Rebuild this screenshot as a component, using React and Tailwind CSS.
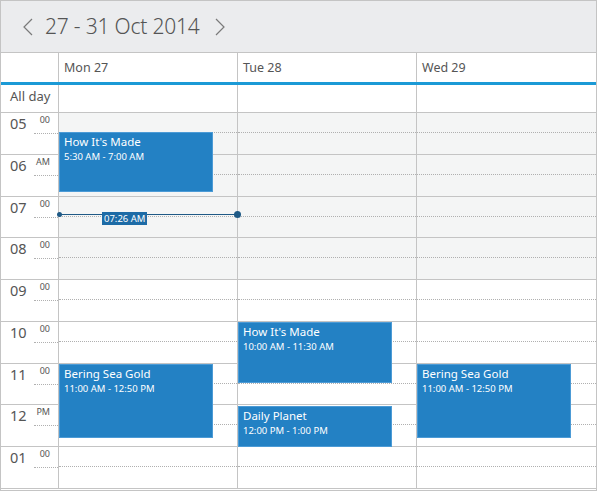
import React from 'react';

const hours = [
  { h: '05', m: '00' },
  { h: '06', m: 'AM' },
  { h: '07', m: '00' },
  { h: '08', m: '00' },
  { h: '09', m: '00' },
  { h: '10', m: '00' },
  { h: '11', m: '00' },
  { h: '12', m: 'PM' },
  { h: '01', m: '00' },
];

const days = ['Mon 27', 'Tue 28', 'Wed 29'];

const events = {
  0: [
    { title: "How It's Made", time: '5:30 AM - 7:00 AM', top: 19, height: 60 },
    { title: 'Bering Sea Gold', time: '11:00 AM - 12:50 PM', top: 251, height: 74 },
  ],
  1: [
    { title: "How It's Made", time: '10:00 AM - 11:30 AM', top: 209, height: 61 },
    { title: 'Daily Planet', time: '12:00 PM - 1:00 PM', top: 293, height: 41 },
  ],
  2: [{ title: 'Bering Sea Gold', time: '11:00 AM - 12:50 PM', top: 251, height: 74 }],
};

const Chevron = ({ dir }) => (
  <svg width="12" height="20" viewBox="0 0 12 20" className="text-[#7a7a7a]">
    <path
      d={dir === 'left' ? 'M10 2 L2 10 L10 18' : 'M2 2 L10 10 L2 18'}
      fill="none"
      stroke="currentColor"
      strokeWidth="1.2"
    />
  </svg>
);

const Event = ({ ev }) => (
  <div
    className="absolute left-0 w-[154px] bg-[#2381c4] border border-[#4c9bd6] px-[4px] text-white"
    style={{ top: ev.top, height: ev.height }}
  >
    <div className="text-[11.5px] leading-[18px]">{ev.title}</div>
    <div className="text-[9.5px] leading-[12px]">{ev.time}</div>
  </div>
);

const App = () => {
  return (
    <div className="w-[597px] h-[491px] overflow-hidden border border-[#c4c4c4] bg-white font-['Noto_Sans','Open_Sans',sans-serif] text-[#555]">
      <div className="h-[52px] bg-[#ebecee] border-b border-[#c4c4c4] flex items-center pl-[21px]">
        <Chevron dir="left" />
        <span className="ml-[11px] mr-[14px] text-[21px] font-light text-[#555] tracking-[-0.2px]">27 - 31 Oct 2014</span>
        <Chevron dir="right" />
      </div>

      <div className="grid grid-cols-[57px_179px_179px_1fr] h-[29px]">
        <div />
        {days.map((d) => (
          <div key={d} className="border-l border-[#c4c4c4] pl-[5px] pt-[6px] text-[12.5px]">
            {d}
          </div>
        ))}
      </div>
      <div className="h-[3px] bg-[#1b9ad6]" />

      <div className="grid grid-cols-[57px_179px_179px_1fr] h-[28px] border-b border-[#c4c4c4]">
        <div className="pl-[9px] pt-[2px] text-[13px]">All day</div>
        <div className="border-l border-[#c4c4c4]" />
        <div className="border-l border-[#c4c4c4]" />
        <div className="border-l border-[#c4c4c4]" />
      </div>

      <div className="grid grid-cols-[57px_179px_179px_1fr]">
        <div>
          {hours.map((r) => (
            <div key={r.h} className="relative h-[41.78px] border-b border-[#c4c4c4]">
              <span className="absolute left-[9px] top-[0px] text-[14.5px] text-[#555]">{r.h}</span>
              <span className="absolute right-[8px] top-[0px] text-[9px] text-[#555]">{r.m}</span>
              <div className="absolute left-[33px] right-0 top-[20px] border-b border-dotted border-[#b0b0b0]" />
            </div>
          ))}
        </div>
        {days.map((d, i) => (
          <div key={d} className="relative border-l border-[#c4c4c4]">
            {hours.map((r, j) => (
              <div
                key={r.h}
                className={`h-[41.78px] border-b border-[#c4c4c4] flex flex-col ${j < 4 ? 'bg-[#f4f5f5]' : 'bg-white'}`}
              >
                <div className="h-[20px] border-b border-dotted border-[#b0b0b0]" />
              </div>
            ))}
            {events[i].map((ev) => (
              <Event key={ev.title + ev.top} ev={ev} />
            ))}
            {i === 0 && (
              <div className="absolute left-0 right-0 top-[101px]">
                <div className="h-[1px] bg-[#1f5a86]" />
                <div className="absolute left-[-2px] top-[-2px] w-[5px] h-[5px] rounded-full bg-[#1f5a86]" />
                <div className="absolute right-[-4px] top-[-3px] w-[7px] h-[7px] rounded-full bg-[#1f5a86] z-10" />
                <div className="absolute left-[43px] top-[-2px] h-[13px] px-[2px] bg-[#1d6ba6] text-white text-[9.5px] leading-[13px]">
                  07:26 AM
                </div>
              </div>
            )}
          </div>
        ))}
      </div>
    </div>
  );
};

export default App;
